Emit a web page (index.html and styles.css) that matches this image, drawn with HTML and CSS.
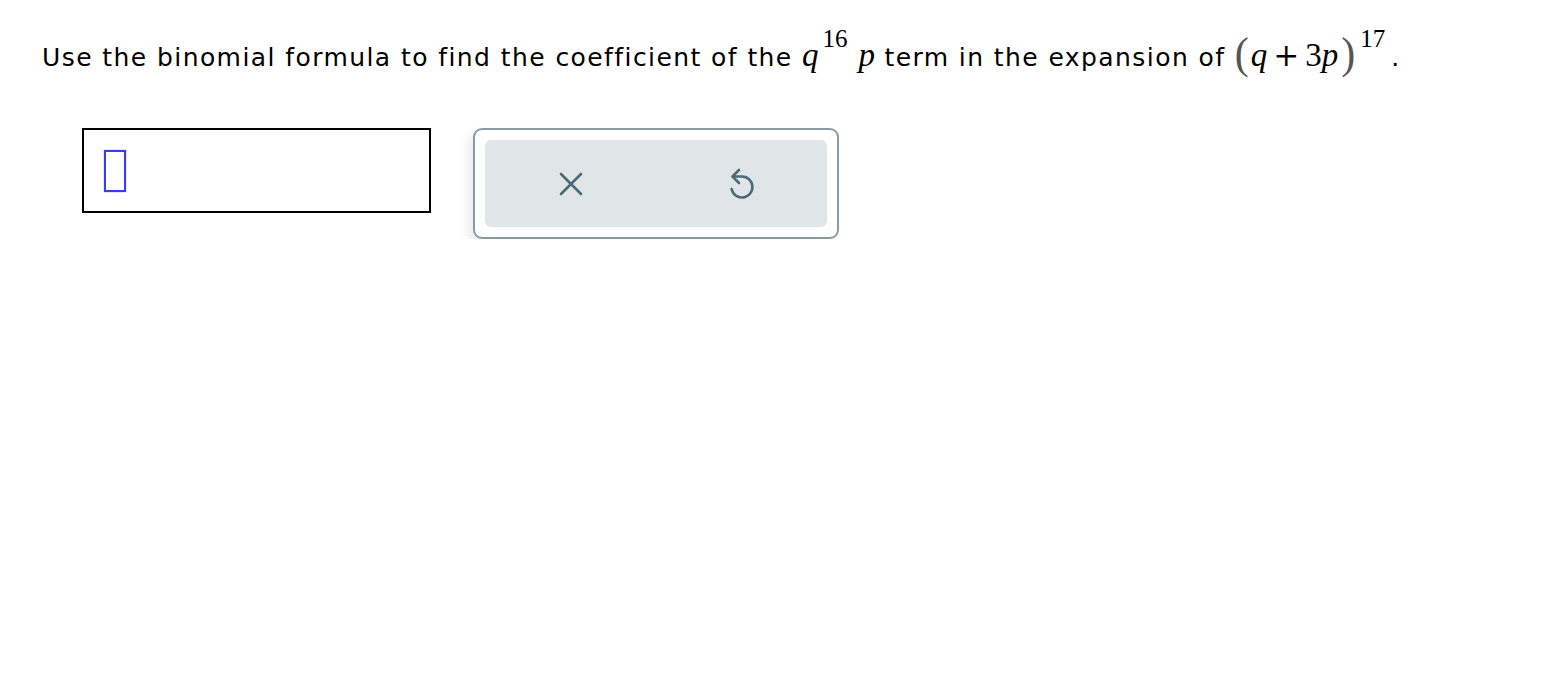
FILE: index.html
```html
<!DOCTYPE html>
<html>
<head>
<meta charset="utf-8">
<link rel="stylesheet" href="styles.css">
</head>
<body>
<div class="page">
  <p class="question">Use the binomial formula to find the coefficient of the <span class="math"><span class="mi">q</span><span class="sup">16</span><span class="mi p">p</span></span> term in the expansion of <span class="math"><span class="paren">(</span><span class="mi q2">q</span><span class="mo">+</span><span class="mn">3</span><span class="mi">p</span><span class="paren rparen">)</span><span class="sup sup2">17</span></span><span class="dot">.</span></p>
  <div class="answer-row">
    <div class="answer-box"><span class="placeholder"></span></div>
    <div class="tools">
      <div class="tools-inner">
        <button class="tool" aria-label="clear">
          <svg width="26" height="26" viewBox="0 0 26 26"><path d="M3 3 L23 23 M23 3 L3 23" stroke="#4a6a78" stroke-width="2.6" stroke-linecap="round" fill="none"/></svg>
        </button>
        <button class="tool" aria-label="undo">
          <svg width="28" height="34" viewBox="0 0 28 34"><path d="M11 3 L4.5 9.5 L11 16" stroke="#4a6a78" stroke-width="2.6" stroke-linecap="round" stroke-linejoin="round" fill="none"/><path d="M5 9.5 L14 9.5 A 10.5 10.5 0 1 1 3.6 22" stroke="#4a6a78" stroke-width="2.6" stroke-linecap="round" fill="none"/></svg>
        </button>
      </div>
    </div>
  </div>
</div>
</body>
</html>
```
FILE: styles.css
```css
html, body {
  margin: 0;
  padding: 0;
  background: #fff;
}
.page {
  padding: 30px 0 0 42px;
  font-family: "DejaVu Sans", Verdana, sans-serif;
  color: #000;
}
.question {
  margin: 0;
  font-size: 25px;
  letter-spacing: 1.42px;
  line-height: 50px;
  white-space: nowrap;
}
.math {
  font-family: "Liberation Serif", "Times New Roman", serif;
  font-size: 33px;
  letter-spacing: 0;
}
.mi {
  font-style: italic;
}
.mi.p {
  margin-left: 11px;
}
.mi.q2 {
  margin-left: 2px;
}
.sup {
  font-size: 25px;
  vertical-align: 19px;
  margin-left: 4px;
  line-height: 0;
}
.paren {
  font-size: 42px;
  color: #555;
  line-height: 0;
  display: inline-block;
  transform: scaleY(1.05);
  vertical-align: -1px;
}
.rparen {
  margin-left: 3px;
}
.mo {
  font-family: "DejaVu Serif", serif;
  font-size: 31px;
  margin: 0 6px;
}
.sup2 {
  margin-left: 5px;
}
.dot {
  margin-left: 6px;
}
.answer-row {
  display: flex;
  align-items: flex-start;
  margin-top: 45px;
  margin-left: 40px;
  gap: 42px;
}
.answer-box {
  box-sizing: border-box;
  width: 349px;
  height: 85px;
  border: 2px solid #000;
  padding: 20px;
}
.placeholder {
  display: block;
  box-sizing: border-box;
  width: 22px;
  height: 42px;
  border: 2.5px solid #3a3aff;
  box-shadow: 0 0 1px #6a6aff;
}
.tools {
  box-sizing: border-box;
  width: 366px;
  height: 111px;
  border: 2px solid #889ba5;
  border-radius: 9px;
  padding: 10px;
  box-shadow: -5px 5px 8px rgba(0, 30, 50, 0.08);
  background: #fff;
}
.tools-inner {
  display: flex;
  height: 100%;
  background: #e0e5e8;
  border-radius: 6px;
}
.tool {
  flex: 1;
  display: flex;
  align-items: center;
  justify-content: center;
  background: none;
  border: 0;
  padding: 0;
  margin: 0;
}
```
